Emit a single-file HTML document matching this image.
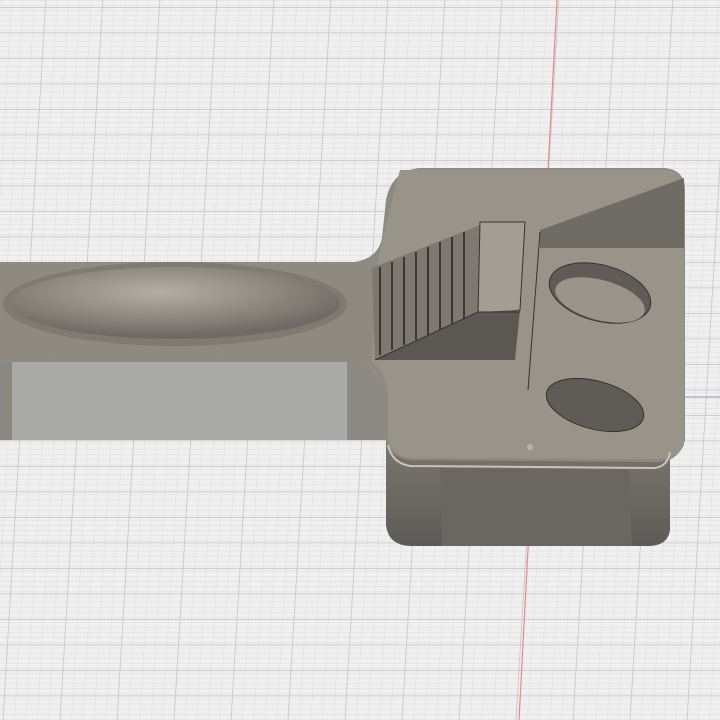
<!DOCTYPE html>
<html><head><style>
html,body{margin:0;padding:0;width:720px;height:720px;overflow:hidden;background:#efefef}
svg{display:block}
</style></head><body>
<svg width="720" height="720" viewBox="0 0 720 720">
<defs>
<pattern id="minor" width="11.4" height="5.1" patternUnits="userSpaceOnUse" patternTransform="skewX(-3.4)">
<path d="M0 0V5.1M0 0H11.4" stroke="#dcdcdc" stroke-width="1" fill="none"/>
</pattern>
<pattern id="major" width="57" height="25.5" patternUnits="userSpaceOnUse" patternTransform="translate(45 7) skewX(-3.4)">
<path d="M0 0V25.5M0 0H57" stroke="#c2c2c2" stroke-width="1.4" fill="none"/>
</pattern>
<radialGradient id="bowl" cx="0.45" cy="0.35" r="0.6">
<stop offset="0" stop-color="#b3afa6"/><stop offset="0.6" stop-color="#8d887f"/><stop offset="1" stop-color="#6f6b64"/>
</radialGradient>
<linearGradient id="front" x1="0" y1="0" x2="0" y2="1">
<stop offset="0" stop-color="#7a766f"/><stop offset="1" stop-color="#5e5b56"/>
</linearGradient>
</defs>
<rect width="720" height="720" fill="#f0f0f0"/>
<rect width="720" height="720" fill="url(#minor)"/>
<rect width="720" height="720" fill="url(#major)"/>
<line x1="557" y1="0" x2="519" y2="720" stroke="#e88" stroke-width="1.2"/>
<line x1="670" y1="397" x2="720" y2="397" stroke="#99a" stroke-width="1"/>

<path d="M386 440 L670 440 L670 530 Q668 545 650 546 L410 546 Q388 545 386 525 Z" fill="url(#front)"/>
<path d="M440 468 L630 470 L632 546 L442 546Z" fill="#6a6761"/>
<path d="M0 358 L350 358 Q385 368 388 400 L388 440 L0 440 Z" fill="#8d8a85"/>
<rect x="12" y="362" width="335" height="78" fill="#a9a9a8"/>
<path d="M0 362 H12 V440 H0Z" fill="#8b8882"/>
<path d="M0 262 L355 262 Q378 258 382 238 L386 200 Q392 170 420 168 L665 168 Q685 170 685 190 L685 440 Q680 460 660 462 L410 460 Q387 457 385 435 L385 395 Q382 365 350 360 L0 358 Z" fill="#8f8a80"/>
<path d="M400 170 L665 170 Q684 172 684 190 L684 440 Q680 458 660 459 L410 458 Q390 455 388 435 L388 395 Q384 368 372 362 L378 260 L392 200 Z" fill="#99948a"/>
<ellipse cx="175" cy="304" rx="172" ry="42" fill="#7f7a72"/>
<ellipse cx="175" cy="303" rx="165" ry="36" fill="url(#bowl)"/>
<path d="M372 268 L480 225 L478 320 L375 360 Z" fill="#7d7970"/>
<g stroke="#3a3834" stroke-width="2">
<line x1="380" y1="267" x2="380" y2="355"/><line x1="392" y1="262" x2="392" y2="350"/>
<line x1="404" y1="257" x2="404" y2="345"/><line x1="416" y1="252" x2="416" y2="340"/>
<line x1="428" y1="247" x2="428" y2="335"/><line x1="440" y1="242" x2="440" y2="330"/>
<line x1="452" y1="237" x2="452" y2="325"/><line x1="464" y1="232" x2="464" y2="320"/>
</g>
<path d="M480 222 L525 222 L520 310 L478 315 Z" fill="#a39e94" stroke="#333" stroke-width="1"/>
<path d="M478 312 L520 310 L515 360 L375 360 Z" fill="#5b5853"/>
<path d="M375 360 L478 312 L520 312" fill="none" stroke="#333" stroke-width="1"/>
<path d="M540 230 L684 178 L684 248 L540 248 Z" fill="#6f6c66"/>
<line x1="540" y1="232" x2="528" y2="390" stroke="#333" stroke-width="1"/>
<ellipse cx="600" cy="293" rx="52" ry="28" transform="rotate(15 600 293)" fill="#5f5c57" stroke="#333"/>
<ellipse cx="600" cy="300" rx="46" ry="20" transform="rotate(15 600 300)" fill="#9a958b"/>
<ellipse cx="595" cy="405" rx="50" ry="24" transform="rotate(15 595 405)" fill="#5f5c57" stroke="#333"/>
<path d="M528 390 L545 430 L660 440 L684 440 L684 445 Q678 458 660 459 L540 458Z" fill="#99948a"/>
<circle cx="530" cy="447" r="3" fill="#b7b3ab"/>
<path d="M388 445 Q392 463 410 466 L655 468 Q668 466 670 452" fill="none" stroke="#c8c4bc" stroke-width="2"/>
</svg>
</body></html>
